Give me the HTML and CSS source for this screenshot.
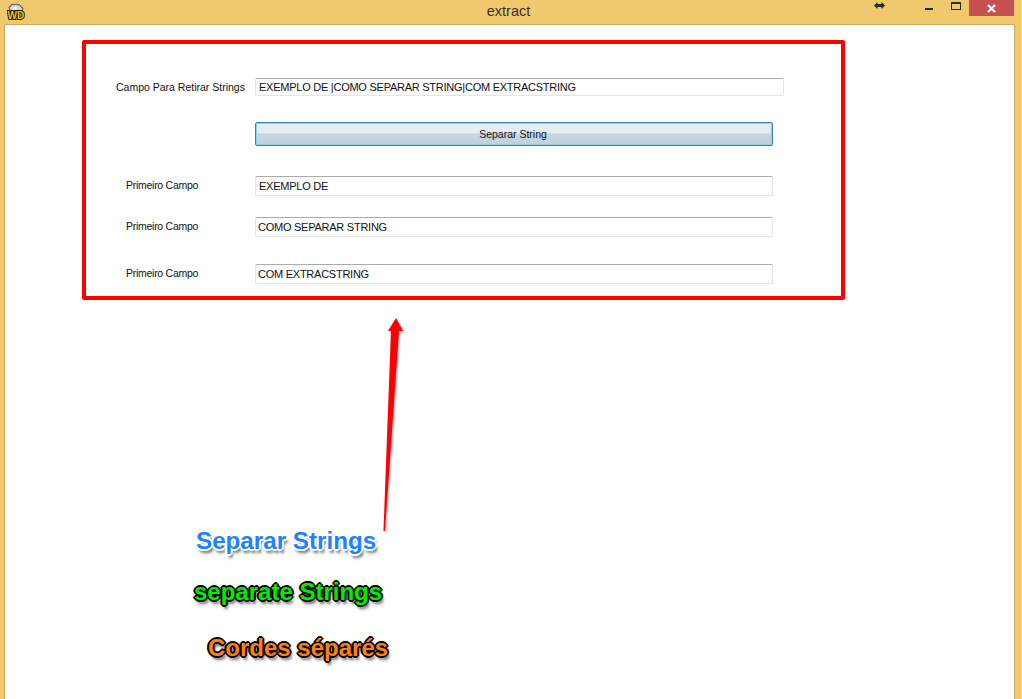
FILE: index.html
```html
<!DOCTYPE html>
<html lang="pt">
<head>
  <meta charset="UTF-8">
  <title>extract</title>
  <link rel="stylesheet" href="styles.css">
</head>
<body>
  <div class="window">
    <div class="titlebar">
      <svg class="app-icon" width="18" height="17" viewBox="0 0 18 17">
        <path d="M2 4l2-1 1-2 2 1 2-1 2 1 2 0 1 2 2 1-1 2 1 2H2l1-2z" fill="#d5dade" stroke="#4a4f55" stroke-width="1"/>
        <circle cx="8" cy="5" r="1.500" fill="#fff"/>
        <text x="0.500" y="15.500" class="app-icon-text">WD</text>
      </svg>
      <span class="title">extract</span>
      <div class="controls">
        <svg class="resize-icon" width="11" height="7" viewBox="0 0 11 7"><path d="M0 3.500l3.500-3.500v2h4v-2l3.500 3.500-3.500 3.500v-2h-4v2z" fill="#2b2b2b"/></svg>
        <span class="btn-min"></span>
        <span class="btn-max"></span>
        <span class="btn-close">
          <svg width="9" height="9" viewBox="0 0 9 9"><path d="M1 1l7 7M8 1l-7 7" stroke="#fff" stroke-width="2.200"/></svg>
        </span>
      </div>
    </div>

    <div class="client">
      <div class="red-box">
        <div class="row row-source">
          <label class="label label-right">Campo Para Retirar Strings</label>
          <input class="field field-wide" type="text" value="EXEMPLO DE |COMO SEPARAR STRING|COM EXTRACSTRING">
        </div>
        <div class="row row-button">
          <button class="separar" type="button">Separar String</button>
        </div>
        <div class="row row-first">
          <label class="label">Primeiro Campo</label>
          <input class="field" type="text" value="EXEMPLO DE">
        </div>
        <div class="row row-second">
          <label class="label">Primeiro Campo</label>
          <input class="field field-tight" type="text" value="COMO SEPARAR STRING">
        </div>
        <div class="row row-third">
          <label class="label">Primeiro Campo</label>
          <input class="field field-tight" type="text" value="COM EXTRACSTRING">
        </div>
      </div>
    </div>
  </div>

  <!-- setas e textos colados por cima do print -->
  <svg class="arrow" width="40" height="230" viewBox="0 0 40 230">
    <path d="M16 8L8 21H11L3.500 221H5L19 21H23Z" fill="#ff0000"/>
  </svg>
  <div class="note note-blue">Separar Strings</div>
  <div class="note note-green">separate Strings</div>
  <div class="note note-orange">Cordes séparés</div>
</body>
</html>
```

FILE: styles.css
```css
* {
  box-sizing: border-box;
}
html, body {
  margin: 0;
  height: 100%;
  overflow: hidden;
}
body {
  font-family: "Liberation Sans", Arial, sans-serif;
  background-color: #f0c86d;
}
.window {
  display: flex;
  flex-direction: column;
  width: 1022px;
  height: 699px;
  background-color: #f0c86d;
  border-right: 1px solid #e6dcc6;
}
.titlebar {
  position: relative;
  display: flex;
  align-items: flex-start;
  height: 25px;
  flex: none;
}
.app-icon {
  margin: 3px 0 0 7px;
  flex: none;
}
.app-icon-text {
  font-family: "Liberation Sans", Arial, sans-serif;
  font-size: 10px;
  font-weight: bold;
  fill: #f7c21c;
  stroke: #1d1400;
  stroke-width: 2px;
  paint-order: stroke;
}
.title {
  position: absolute;
  left: 0;
  right: 4px;
  top: 3px;
  text-align: center;
  font-size: 14.500px;
  line-height: 16px;
  color: #333;
}
.controls {
  display: flex;
  align-items: flex-start;
  margin-left: auto;
  margin-right: 7px;
}
.resize-icon {
  margin: 2px 0 0 0;
}
.btn-min {
  width: 8px;
  height: 2px;
  margin: 8px 0 0 40px;
  background-color: #2b2b2b;
}
.btn-max {
  width: 10px;
  height: 8px;
  margin: 2px 0 0 18px;
  border: 1px solid #2b2b2b;
  border-top-width: 2px;
}
.btn-close {
  display: flex;
  align-items: center;
  justify-content: center;
  width: 45px;
  height: 16px;
  margin-left: 8px;
  background-color: #c75050;
}
.client {
  flex: 1;
  margin: 0 7px 0 5px;
  padding: 15px 0 0 77px;
  background-color: #fff;
  box-shadow: 0 -1px 0 #c9a95d, -1px 0 0 #c9a95d, 1px 0 0 #c9a95d;
}
.red-box {
  width: 763px;
  height: 260px;
  padding-top: 34px;
  border: 4px solid #ff0000;
  border-radius: 2px;
}
.row {
  display: flex;
  align-items: center;
  padding-left: 169px;
  position: relative;
}
.row-button {
  margin-top: 26px;
}
.row-first {
  margin-top: 30px;
}
.row-second {
  margin-top: 21px;
}
.row-third {
  margin-top: 27px;
}
.label {
  position: absolute;
  left: 40px;
  margin-top: -2px;
  font-size: 10.500px;
  letter-spacing: -0.27px;
  color: #111;
}
.label-right {
  left: 30px;
  margin-top: 0;
  letter-spacing: 0;
}
.field {
  width: 518px;
  height: 20px;
  padding: 0 3px;
  font-family: "Liberation Sans", Arial, sans-serif;
  font-size: 11px;
  letter-spacing: -0.25px;
  color: #111;
  background-color: #fff;
  border: 1px solid #e3e5e9;
  border-top-color: #ababab;
  border-radius: 2px;
  outline: none;
}
.field-wide {
  width: 529px;
  height: 18px;
}
.field-tight {
  padding-left: 2px;
}
.separar {
  width: 518px;
  height: 24px;
  padding: 0 2px 0 0;
  font-family: "Liberation Sans", Arial, sans-serif;
  font-size: 10.500px;
  color: #111;
  background: linear-gradient(#e4ecef 0, #e4ecef 45%, #c6d8e1 50%, #bdd1dc 100%);
  border: 1px solid #3c7fb1;
  box-shadow: inset 0 0 0 1px #8fd0ec;
  border-radius: 2px;
}
.arrow {
  position: absolute;
  left: 380px;
  top: 310px;
  filter: drop-shadow(1px 1px 1px rgba(0, 0, 0, 0.35));
}
.note {
  position: absolute;
  font-size: 24px;
  line-height: 30px;
  font-weight: bold;
  white-space: nowrap;
}
.note-blue {
  left: 196px;
  top: 526px;
  font-size: 24.200px;
  color: #1e82ff;
  text-shadow: -2px 0 0 #fff, 2px 0 0 #fff, 0 -2px 0 #fff, 0 2px 0 #fff, -1px -1px 0 #fff, 1px -1px 0 #fff, -1px 1px 0 #fff, 1px 1px 0 #fff, 2px 4px 3px rgba(0, 0, 0, 0.6);
}
.note-green {
  left: 194px;
  top: 577px;
  color: #00ee00;
  text-shadow: -2px 0 0 #000, 2px 0 0 #000, 0 -2px 0 #000, 0 2px 0 #000, -1px -1px 0 #000, 1px -1px 0 #000, -1px 1px 0 #000, 1px 1px 0 #000, 2px 4px 3px rgba(0, 0, 0, 0.6);
}
.note-orange {
  left: 208px;
  top: 633px;
  color: #ff8012;
  text-shadow: -2px 0 0 #000, 2px 0 0 #000, 0 -2px 0 #000, 0 2px 0 #000, -1px -1px 0 #000, 1px -1px 0 #000, -1px 1px 0 #000, 1px 1px 0 #000, 2px 4px 3px rgba(0, 0, 0, 0.6);
}
```
